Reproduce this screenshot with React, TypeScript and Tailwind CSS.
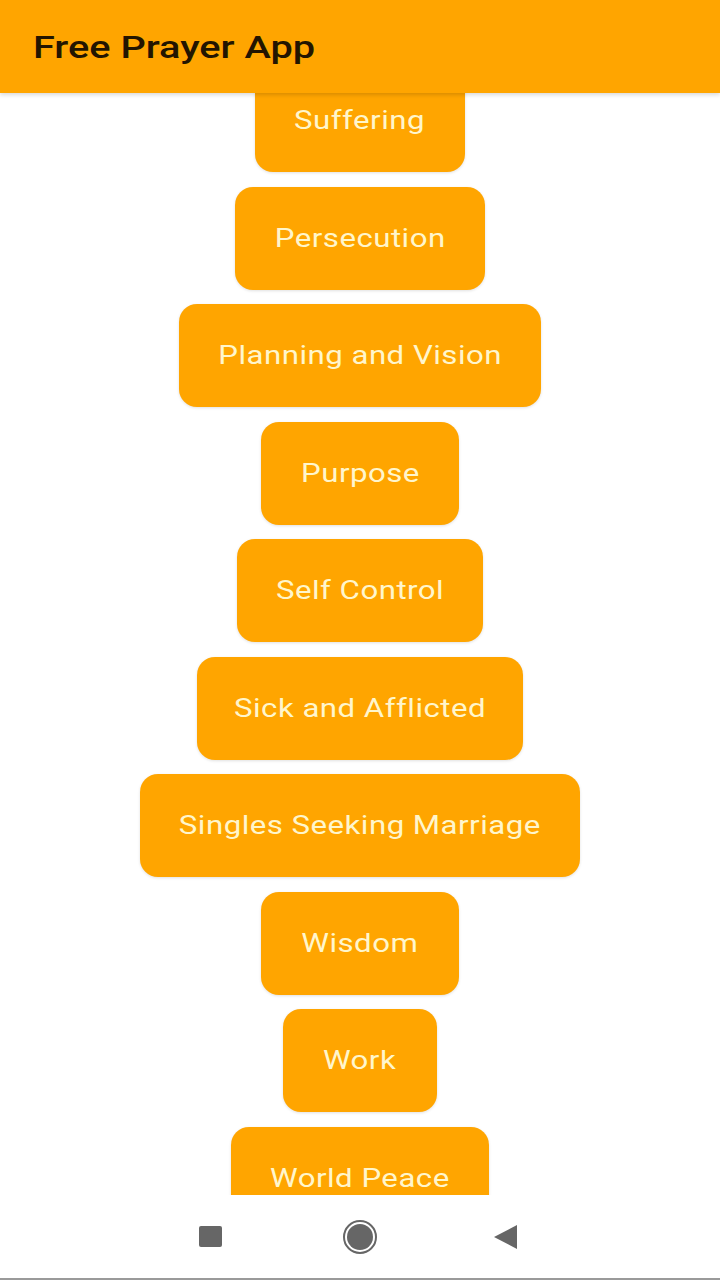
import { useState } from "react";

const topics = [
  { label: "Suffering", w: "w-[210px]" },
  { label: "Persecution", w: "w-[250px]" },
  { label: "Planning and Vision", w: "w-[362px]" },
  { label: "Purpose", w: "w-[198px]" },
  { label: "Self Control", w: "w-[246px]" },
  { label: "Sick and Afflicted", w: "w-[326px]" },
  { label: "Singles Seeking Marriage", w: "w-[440px]" },
  { label: "Wisdom", w: "w-[198px]" },
  { label: "Work", w: "w-[154px]" },
  { label: "World Peace", w: "w-[258px]" },
];

export default function App() {
  const [selected, setSelected] = useState<string | null>(null);

  return (
    <div
      className="flex h-[1280px] w-[720px] flex-col overflow-hidden bg-white"
      style={{ fontFamily: "Roboto, 'Liberation Sans', sans-serif" }}
    >
      {/* app bar */}
      <header className="relative z-10 flex h-[93px] shrink-0 items-center bg-[#ffa500] pl-[33px] shadow-[0_2px_4px_rgba(0,0,0,0.15)]">
        <h1 className="origin-left scale-x-[1.24] text-[32px] font-medium text-[#231500]">
          Free Prayer App
        </h1>
      </header>

      {/* scrolled list */}
      <main className="h-[1102px] shrink-0 overflow-hidden bg-white">
        <div className="-mt-[24px] flex flex-col items-center gap-[14.5px]">
          {topics.map((t) => (
            <button
              key={t.label}
              onClick={() => setSelected(t.label)}
              className={`${t.w} flex h-[103px] shrink-0 items-center justify-center rounded-[18px] bg-[#ffa500] shadow-[0_1px_3px_rgba(0,0,0,0.12)] ${
                selected === t.label ? "brightness-95" : ""
              }`}
            >
              <span className="scale-x-[1.2] whitespace-nowrap text-[26px] tracking-[0.4px] text-[#fff6cc]">
                {t.label}
              </span>
            </button>
          ))}
        </div>
      </main>

      {/* android nav bar */}
      <nav className="flex h-[83px] shrink-0 items-center justify-center bg-white pr-[4px]">
        <div className="mr-[121px] h-[21px] w-[23px] rounded-[2px] bg-[#666666]" />
        <div className="flex h-[34px] w-[34px] items-center justify-center rounded-full border-[2px] border-[#666666]">
          <div className="h-[26px] w-[26px] rounded-full bg-[#666666]" />
        </div>
        <svg className="ml-[117px]" width="23" height="24" viewBox="0 0 23 24">
          <path d="M23 0 L0 12 L23 24 Z" fill="#666666" />
        </svg>
      </nav>
      <div className="h-[2px] shrink-0 bg-[#9a9a9a]" />
    </div>
  );
}
